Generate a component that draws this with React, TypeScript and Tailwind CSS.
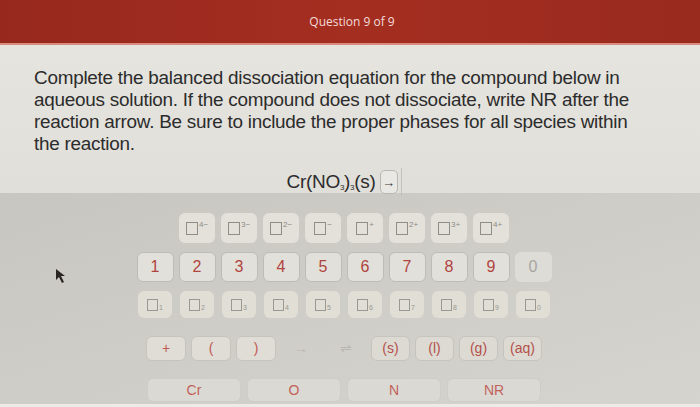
import React from "react";

const SUPS = ["4−", "3−", "2−", "−", "+", "2+", "3+", "4+"];
const DIGITS = ["1", "2", "3", "4", "5", "6", "7", "8", "9", "0"];
const SUBS = ["1", "2", "3", "4", "5", "6", "7", "8", "9", "0"];

function Box({ small = false }: { small?: boolean }) {
  return (
    <span
      className={
        small
          ? "inline-block w-[11px] h-[12px] border border-[#9a9893]"
          : "inline-block w-[12px] h-[13px] border border-[#8f8d88]"
      }
    />
  );
}

function Cursor() {
  return (
    <svg
      className="absolute left-[55px] top-[268px]"
      width="14"
      height="16"
      viewBox="0 0 14 16"
    >
      <path d="M1 1 L1 12 L4 9 L7 15 L9 14 L6 8 L10 8 Z" fill="#2a2624" />
    </svg>
  );
}

export default function App() {
  return (
    <div
      className="relative w-[700px] h-[407px] overflow-hidden bg-[#e4e2dd] text-[#2b2b2b]"
      style={{ fontFamily: '"Liberation Sans", Arial, sans-serif' }}
    >
      <header className="h-[45px] bg-gradient-to-r from-[#97281d] via-[#a42e20] to-[#992a1e] flex items-center justify-center border-b-[2px] border-[#d98b7f]">
        <span
          className="text-[12px] text-[#f3dcd8] pl-[4px]"
          style={{ fontFamily: '"Open Sans", sans-serif' }}
        >
          Question 9 of 9
        </span>
      </header>

      <section className="h-[148px] bg-gradient-to-b from-[#e6e4df] to-[#e1dfd9] pl-[34px] pt-[22px]">
        <p className="text-[18.9px] leading-[22px] tracking-[-0.25px] text-[#2c2c2c] whitespace-nowrap">
          Complete the balanced dissociation equation for the compound below in
          <br />
          aqueous solution. If the compound does not dissociate, write NR after the
          <br />
          reaction arrow. Be sure to include the proper phases for all species within
          <br />
          the reaction.
        </p>
        <div className="flex items-center justify-center mt-[13px] pr-[46px]">
          <span className="text-[19px] text-[#2c2c2c] tracking-[-0.3px]">
            Cr(NO<sub className="text-[8px]">3</sub>)<sub className="text-[8px]">3</sub>(s)
          </span>
          <span className="ml-[4px] w-[18px] h-[24px] rounded-[5px] border border-[#b9b7b2] bg-[#e9e8e4] flex items-center justify-center text-[13px] text-[#3a3a3a]">
            →
          </span>
          <span className="ml-[3px] w-px h-[28px] bg-[#c3c1bc]" />
        </div>
      </section>

      <section className="h-[214px] bg-gradient-to-br from-[#c8c6c1] via-[#cfcdc8] to-[#d6d4cf] flex flex-col items-center pt-[20px] pr-[12px]">
        <div className="flex gap-[6px]">
          {SUPS.map((s) => (
            <div
              key={s}
              className="w-[36px] h-[30px] rounded-[6px] bg-[#e3e1da] flex items-center justify-center"
            >
              <Box />
              <span className="text-[8px] text-[#8d8b86] self-start mt-[8px] ml-[1px] leading-none">
                {s}
              </span>
            </div>
          ))}
        </div>

        <div className="flex gap-[5px] mt-[9px]">
          {DIGITS.map((d) => (
            <div
              key={d}
              className={
                d === "0"
                  ? "w-[37px] h-[30px] rounded-[6px] bg-[#dedcd6] flex items-center justify-center text-[16px] text-[#a8a6a1]"
                  : "w-[37px] h-[30px] rounded-[6px] border border-[#bebcb7] bg-[#e2e0da] flex items-center justify-center text-[16px] text-[#b0443e]"
              }
            >
              {d}
            </div>
          ))}
        </div>

        <div className="flex gap-[8px] mt-[9px]">
          {SUBS.map((d, i) => (
            <div
              key={i}
              className="w-[34px] h-[27px] rounded-[6px] bg-[#e0ded5] flex items-center justify-center"
            >
              <Box small />
              <span className="text-[7px] text-[#9a9893] self-end mb-[7px] ml-[1px] leading-none">
                {d}
              </span>
            </div>
          ))}
        </div>

        <div className="flex gap-[5px] mt-[18px] text-[14px]">
          {["+", "(", ")"].map((t) => (
            <div
              key={t}
              className="w-[40px] h-[25px] rounded-[6px] border border-[#c6c4be] bg-[#dfddd6] flex items-center justify-center text-[#c25a52]"
            >
              {t}
            </div>
          ))}
          <div className="w-[40px] h-[25px] flex items-center justify-center text-[#b9b7b1]">→</div>
          <div className="w-[40px] h-[25px] flex items-center justify-center text-[#b9b7b1]">⇌</div>
          {["(s)", "(l)", "(g)", "(aq)"].map((t) => (
            <div
              key={t}
              className="w-[39px] h-[25px] rounded-[6px] border border-[#c6c4be] bg-[#dcdad3] flex items-center justify-center text-[#b4504a]"
            >
              {t}
            </div>
          ))}
        </div>

        <div className="flex gap-[6px] mt-[17px] text-[14px]">
          {["Cr", "O", "N", "NR"].map((t) => (
            <div
              key={t}
              className="w-[94px] h-[24px] rounded-[6px] border border-[#cfcdc7] bg-[#dbd9d3] flex items-center justify-center text-[#c2625b]"
            >
              {t}
            </div>
          ))}
        </div>
      </section>
      <div className="absolute bottom-0 left-0 right-0 h-[3px] bg-[#ecebe7]" />
      <Cursor />
    </div>
  );
}
